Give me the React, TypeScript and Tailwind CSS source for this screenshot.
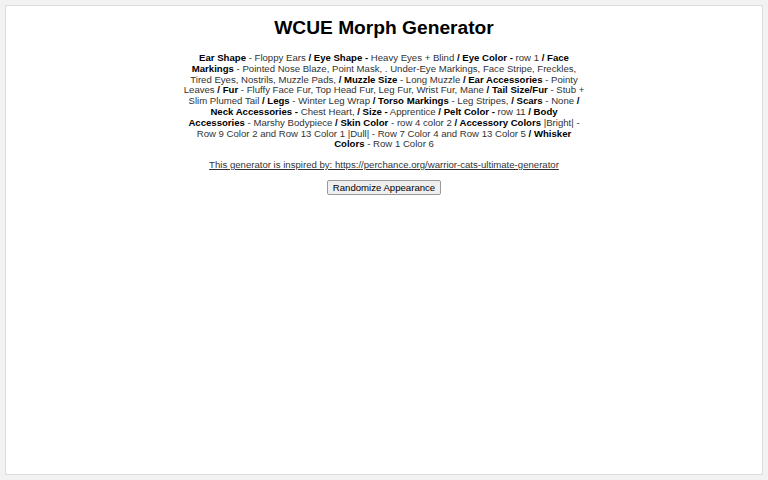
import React from 'react';

const Sep: React.FC = () => <b className="text-black"> / </b>;

const App: React.FC = () => {
  return (
    <div className="h-[480px] bg-[#f2f2f2] p-[5px] font-['Liberation_Sans',Arial,sans-serif]">
      <div className="h-full bg-white border border-[#dcdcdc] flex flex-col items-center pt-[11px]">
        <h1 className="text-[19.2px] leading-[22px] font-bold text-black">WCUE Morph Generator</h1>

        <p className="mt-[14px] w-[404px] text-center text-[9.6px] leading-[10.8px] text-[#333]">
          <b className="text-black">Ear Shape</b> - Floppy Ears<Sep />
          <b className="text-black">Eye Shape -</b> Heavy Eyes + Blind<Sep />
          <b className="text-black">Eye Color -</b> row 1<Sep />
          <b className="text-black">Face Markings</b> - Pointed Nose Blaze, Point Mask, . Under-Eye Markings, Face Stripe, Freckles, Tired Eyes, Nostrils, Muzzle Pads, <b className="text-black">/ </b>
          <b className="text-black">Muzzle Size</b> - Long Muzzle<Sep />
          <b className="text-black">Ear Accessories</b> - Pointy Leaves<Sep />
          <b className="text-black">Fur</b> - Fluffy Face Fur, Top Head Fur, Leg Fur, Wrist Fur, Mane<Sep />
          <b className="text-black">Tail Size/Fur</b> - Stub + Slim Plumed Tail<Sep />
          <b className="text-black">Legs</b> - Winter Leg Wrap<Sep />
          <b className="text-black">Torso Markings</b> - Leg Stripes, <b className="text-black">/ </b>
          <b className="text-black">Scars</b> - None<Sep />
          <b className="text-black">Neck Accessories -</b> Chest Heart, <b className="text-black">/ </b>
          <b className="text-black">Size -</b> Apprentice<Sep />
          <b className="text-black">Pelt Color -</b> row 11<Sep />
          <b className="text-black">Body Accessories</b> - Marshy Bodypiece<Sep />
          <b className="text-black">Skin Color</b> - row 4 color 2<Sep />
          <b className="text-black">Accessory Colors</b> |Bright| - Row 9 Color 2 and Row 13 Color 1 |Dull| - Row 7 Color 4 and Row 13 Color 5<Sep />
          <b className="text-black">Whisker Colors</b> - Row 1 Color 6
        </p>

        <p className="mt-[10px] text-[9.6px] leading-[10.8px] text-[#333] underline">
          This generator is inspired by: https://perchance.org/warrior-cats-ultimate-generator
        </p>

        <button className="mt-[9px] h-[15px] px-[5px] text-[9.6px] leading-none text-black bg-[#efefef] border border-[#9a9a9a] rounded-[2px]">
          Randomize Appearance
        </button>
      </div>
    </div>
  );
};

export default App;
